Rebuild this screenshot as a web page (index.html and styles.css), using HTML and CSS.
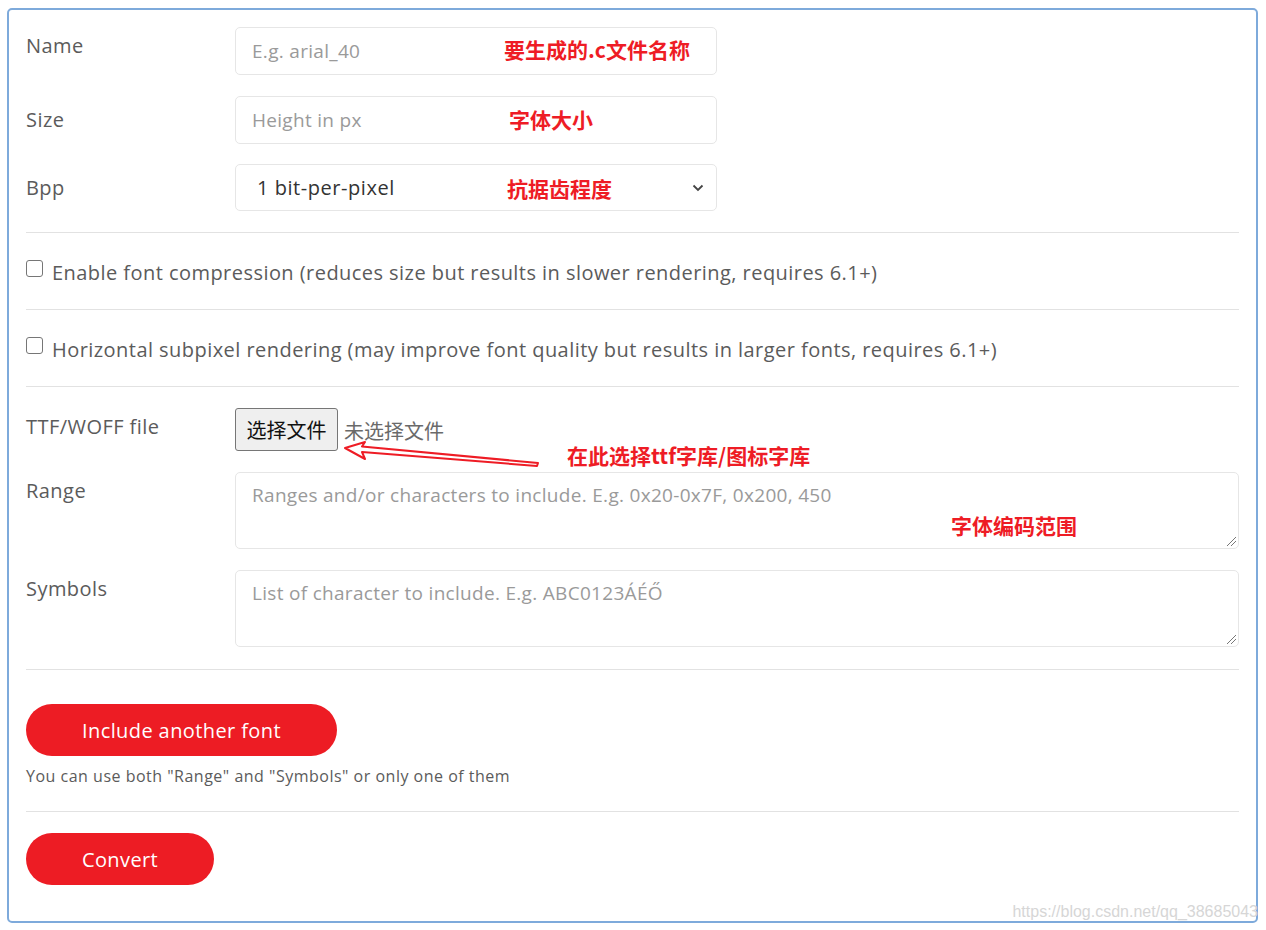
FILE: index.html
```html
<!DOCTYPE html>
<html lang="zh">
<head>
<meta charset="utf-8">
<title>Font converter</title>
<link rel="stylesheet" href="styles.css">
</head>
<body>
<div class="frame">
  <div class="fields">
    <div class="row">
      <label class="label">Name</label>
      <input class="input" type="text" placeholder="E.g. arial_40">
    </div>
    <div class="row row-center">
      <label class="label label-flat">Size</label>
      <input class="input" type="text" placeholder="Height in px">
    </div>
    <div class="row row-center">
      <label class="label label-flat">Bpp</label>
      <div class="select">
        <span>1 bit-per-pixel</span>
        <svg class="chevron" width="12" height="8" viewBox="0 0 12 8"><polyline points="1.5,1.5 6,6 10.5,1.5" fill="none" stroke="#444" stroke-width="1.8"/></svg>
      </div>
    </div>
  </div>
  <hr class="sep sep-first">
  <div class="check-row">
    <span class="checkbox"></span>
    <span class="check-text">Enable font compression (reduces size but results in slower rendering, requires 6.1+)</span>
  </div>
  <hr class="sep">
  <div class="check-row">
    <span class="checkbox"></span>
    <span class="check-text">Horizontal subpixel rendering (may improve font quality but results in larger fonts, requires 6.1+)</span>
  </div>
  <hr class="sep">
  <div class="fields fields-file">
    <div class="row">
      <label class="label">TTF/WOFF file</label>
      <div class="file">
        <span class="file-btn">选择文件</span>
        <span class="file-none">未选择文件</span>
      </div>
    </div>
    <div class="row row-wide">
      <label class="label">Range</label>
      <div class="textarea"><span class="ph">Ranges and/or characters to include. E.g. 0x20-0x7F, 0x200, 450</span><span class="grip"></span></div>
    </div>
    <div class="row row-wide">
      <label class="label">Symbols</label>
      <div class="textarea"><span class="ph">List of character to include. E.g. ABC0123ÁÉŐ</span><span class="grip"></span></div>
    </div>
  </div>
  <hr class="sep">
  <button class="btn btn-include">Include another font</button>
  <p class="hint">You can use both "Range" and "Symbols" or only one of them</p>
  <hr class="sep sep-bottom">
  <button class="btn btn-convert">Convert</button>

  <span class="note note-name">要生成的.c文件名称</span>
  <span class="note note-size">字体大小</span>
  <span class="note note-bpp">抗据齿程度</span>
  <span class="note note-file">在此选择ttf字库/图标字库</span>
  <span class="note note-range">字体编码范围</span>
  <svg class="arrow" width="220" height="44" viewBox="0 0 220 44">
    <path d="M15,18 L35,12 L32,16.5 L208,33 L207,36 L32,22 L35,29 Z" fill="none" stroke="#ee1c25" stroke-width="2" stroke-linejoin="round"/>
  </svg>
  <span class="watermark">https://blog.csdn.net/qq_38685043</span>
</div>
</body>
</html>
```
FILE: styles.css
```css
* { box-sizing: border-box; }

body {
  margin: 0;
  background: #ffffff;
  font-family: "Open Sans", "Noto Sans CJK SC", sans-serif;
  color: #5b5b5b;
}

.frame {
  position: relative;
  margin: 8px 8px 0 7px;
  height: 915px;
  border: 2px solid #7eaadb;
  border-radius: 5px;
  padding: 17px 17px 36px 17px;
}

.fields {
  display: flex;
  flex-direction: column;
  gap: 20.5px;
}

.fields-file {
  padding-top: 21px;
  gap: 21px;
}

.row {
  display: grid;
  grid-template-columns: 209px 482px;
  align-items: start;
}

.row-wide {
  grid-template-columns: 209px 1fr;
}

.row-center {
  align-items: center;
}

.label {
  font-size: 20px;
  letter-spacing: 0.45px;
  line-height: 26px;
  padding-top: 6px;
  color: #5b5b5b;
}

.label-flat {
  padding-top: 1px;
}

.input {
  height: 48px;
  width: 482px;
  border: 1px solid #e6e6e6;
  border-radius: 5px;
  padding: 0 16px;
  font-family: inherit;
  font-size: 19px;
  letter-spacing: 0.3px;
  color: #444;
  outline: none;
}

.input::placeholder {
  color: #9a9a9a;
}

.select {
  height: 47px;
  border: 1px solid #e6e6e6;
  border-radius: 5px;
  padding: 0 12px 0 21px;
  display: flex;
  align-items: center;
  justify-content: space-between;
  font-size: 20px;
  letter-spacing: 0.55px;
  color: #333;
}

.chevron {
  display: block;
}

.sep {
  border: 0;
  border-top: 1px solid #e2e2e2;
  margin: 22px 0 0;
  height: 0;
}

.sep-first {
  margin-top: 21px;
}

.check-row {
  height: 76px;
  display: flex;
  align-items: center;
  gap: 9px;
  padding-top: 2px;
}

.checkbox {
  flex: none;
  width: 17px;
  height: 17px;
  border: 1px solid #767676;
  border-radius: 3px;
  background: #fff;
  margin-top: -7px;
}

.check-text {
  font-size: 20px;
  letter-spacing: 0.45px;
  color: #5b5b5b;
  white-space: nowrap;
}

.check-row + .sep {
  margin-top: 0;
}

.file {
  display: flex;
  align-items: center;
  gap: 6px;
}

.file-btn {
  height: 43px;
  width: 103px;
  display: flex;
  align-items: center;
  justify-content: center;
  background: #efefef;
  border: 1px solid #767676;
  border-radius: 3px;
  font-family: "Noto Sans CJK SC", sans-serif;
  font-size: 20px;
  color: #111;
}

.file-none {
  font-family: "Noto Sans CJK SC", sans-serif;
  font-size: 20px;
  color: #6a6a6a;
  padding-top: 1px;
}

.textarea {
  position: relative;
  height: 77px;
  border: 1px solid #e6e6e6;
  border-radius: 5px;
  padding: 9px 16px;
}

.ph {
  font-size: 19px;
  letter-spacing: 0.3px;
  color: #9a9a9a;
}

.grip {
  position: absolute;
  right: 2px;
  bottom: 2px;
  width: 9px;
  height: 9px;
  background: linear-gradient(135deg, transparent 45%, #777 45%, #777 52%, transparent 52%, transparent 70%, #777 70%, #777 77%, transparent 77%);
}

.btn {
  display: block;
  height: 52px;
  border: 0;
  border-radius: 26px;
  background: #ed1c24;
  color: #ffffff;
  font-family: "Open Sans", "Noto Sans CJK SC", sans-serif;
  font-size: 20px;
  font-weight: 500;
  letter-spacing: 0.4px;
  padding: 0;
}

.btn-include {
  width: 311px;
  margin-top: 34px;
}

.btn-convert {
  width: 188px;
  margin-top: 21px;
}

.hint {
  margin: 9px 0 0;
  font-size: 16px;
  letter-spacing: 0.5px;
  line-height: 22px;
  color: #5b5b5b;
}

.sep-bottom {
  margin-top: 24px;
}

.note {
  position: absolute;
  font-family: "Noto Sans CJK SC", sans-serif;
  font-weight: 700;
  font-size: 21px;
  line-height: 24px;
  color: #ee1c25;
  white-space: nowrap;
}

.note-name { left: 495px; top: 27px; }
.note-size { left: 500px; top: 97px; }
.note-bpp { left: 498px; top: 166px; }
.note-file { left: 558px; top: 433px; }
.note-range { left: 942px; top: 503px; }

.arrow {
  position: absolute;
  left: 321px;
  top: 420px;
}

.watermark {
  position: absolute;
  right: -2px;
  bottom: 0px;
  font-family: "Liberation Sans", sans-serif;
  font-size: 16px;
  color: #d6d6d6;
  white-space: nowrap;
}
```
